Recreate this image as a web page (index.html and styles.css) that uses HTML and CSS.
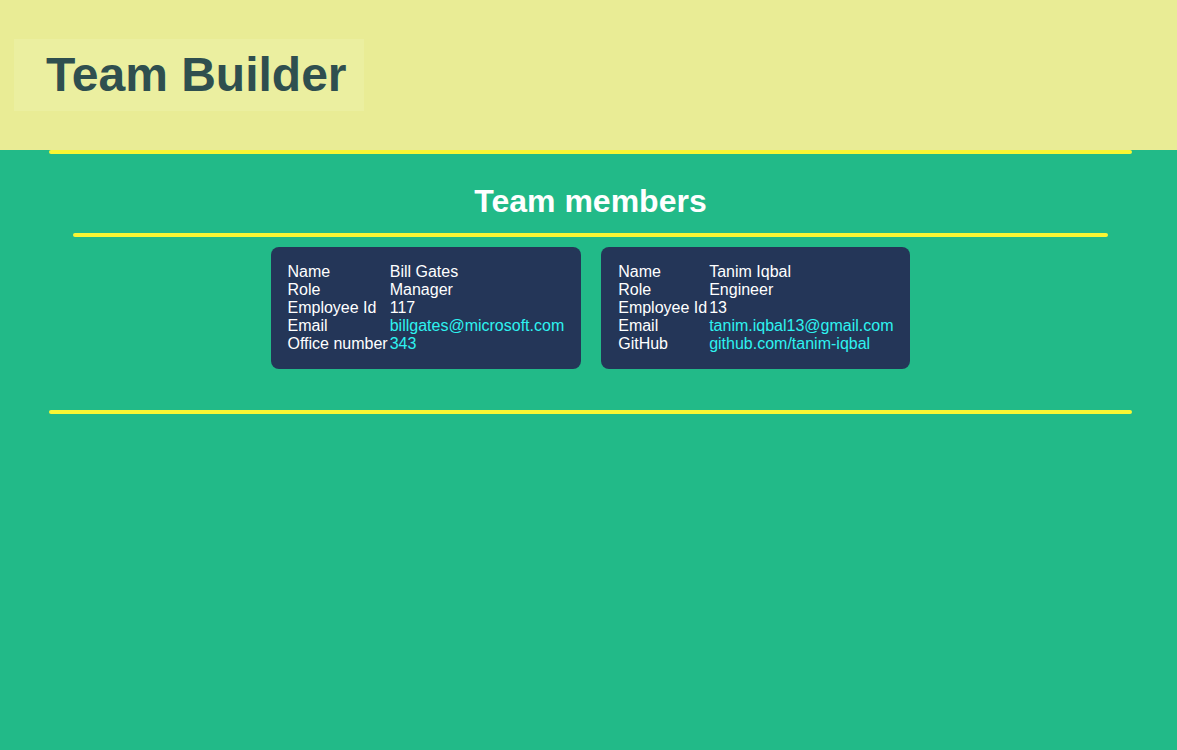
FILE: index.html
```html
<!DOCTYPE html>
<html lang="en">
<head>
<meta charset="utf-8">
<title>Team Builder</title>
<link rel="stylesheet" href="styles.css">
</head>
<body>
<header class="header">
  <h1 class="title">Team Builder</h1>
</header>
<main class="main">
  <div class="rule rule-top"></div>
  <h2 class="section-title">Team members</h2>
  <div class="rule rule-inner"></div>
  <div class="cards">
    <div class="card">
      <table class="info">
        <tr><td class="label">Name</td><td>Bill Gates</td></tr>
        <tr><td class="label">Role</td><td>Manager</td></tr>
        <tr><td class="label">Employee Id</td><td>117</td></tr>
        <tr><td class="label">Email</td><td class="link">billgates@microsoft.com</td></tr>
        <tr><td class="label">Office number</td><td class="link">343</td></tr>
      </table>
    </div>
    <div class="card">
      <table class="info">
        <tr><td class="label">Name</td><td>Tanim Iqbal</td></tr>
        <tr><td class="label">Role</td><td>Engineer</td></tr>
        <tr><td class="label">Employee Id</td><td>13</td></tr>
        <tr><td class="label">Email</td><td class="link">tanim.iqbal13@gmail.com</td></tr>
        <tr><td class="label">GitHub</td><td class="link">github.com/tanim-iqbal</td></tr>
      </table>
    </div>
  </div>
  <div class="rule rule-bottom"></div>
</main>
</body>
</html>
```

FILE: styles.css
```css
html, body {
  margin: 0;
  padding: 0;
}
body {
  background: #22ba88;
  min-height: 100vh;
  font-family: "Liberation Sans", Arial, Helvetica, sans-serif;
}
.header {
  background: #e9ec95;
  height: 150px;
  padding: 39px 0 0 14px;
  box-sizing: border-box;
}
.title {
  display: inline-block;
  margin: 0;
  background: #ebefa0;
  color: #2f4f4f;
  font-size: 48px;
  font-weight: bold;
  line-height: 72px;
  height: 72px;
  padding: 0 17px 0 32px;
}
.main {
  margin: 0 45px 0 49px;
  display: flex;
  flex-direction: column;
}
.rule {
  height: 4px;
  background: #f9f634;
  border-radius: 2px;
}
.section-title {
  margin: 0;
  padding-top: 29px;
  height: 79px;
  box-sizing: border-box;
  text-align: center;
  color: #ffffff;
  font-size: 32px;
  font-weight: bold;
  line-height: 37px;
}
.rule-inner {
  margin: 0 24px;
}
.cards {
  display: flex;
  justify-content: center;
  gap: 20px;
  margin-top: 10px;
}
.card {
  background: #243658;
  border-radius: 8px;
  padding: 16px 17px 16px 17px;
  color: #ffffff;
}
.info {
  border-collapse: collapse;
  font-size: 16px;
  line-height: 18px;
}
.info td {
  padding: 0;
  vertical-align: top;
  white-space: nowrap;
}
.info td.label {
  padding-right: 2px;
}
.link {
  color: #2ef2f0;
}
.rule-bottom {
  margin-top: 41px;
}
```
